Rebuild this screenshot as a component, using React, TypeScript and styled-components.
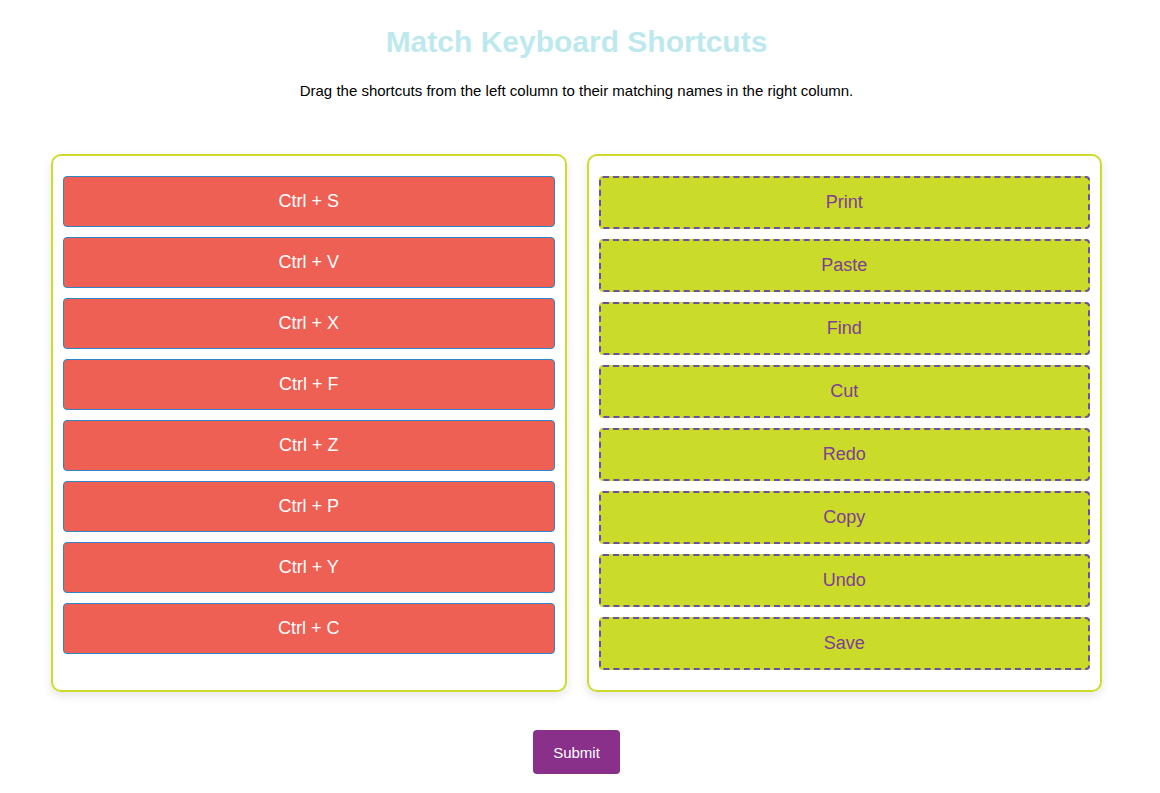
import { createGlobalStyle, styled } from 'styled-components'

const shortcuts = ['Ctrl + S', 'Ctrl + V', 'Ctrl + X', 'Ctrl + F', 'Ctrl + Z', 'Ctrl + P', 'Ctrl + Y', 'Ctrl + C']
const names = ['Print', 'Paste', 'Find', 'Cut', 'Redo', 'Copy', 'Undo', 'Save']

const GlobalStyle = createGlobalStyle`
    body {
        margin: 0;
        background: #fff;
        font-family: "Liberation Sans", Arial, sans-serif;
    }
`

const App = () => {
  return (
    <>
      <GlobalStyle />
      <Page>
        <Title>Match Keyboard Shortcuts</Title>
        <Intro>Drag the shortcuts from the left column to their matching names in the right column.</Intro>
        <Board>
          <Column>
            {shortcuts.map((s) => (
              <Shortcut key={s}>{s}</Shortcut>
            ))}
          </Column>
          <Column>
            {names.map((n) => (
              <Target key={n}>{n}</Target>
            ))}
          </Column>
        </Board>
        <SubmitButton>Submit</SubmitButton>
      </Page>
    </>
  )
}

const Page = styled.div`
    display: flex;
    flex-direction: column;
    align-items: center;
    padding: 25px 7px 0 0;
`

const Title = styled.h1`
    margin: 0;
    font-size: 30px;
    font-weight: bold;
    color: #bde9ee;
`

const Intro = styled.p`
    margin: 23px 0 0;
    font-size: 15px;
    color: #000;
`

const Board = styled.div`
    display: flex;
    gap: 20px;
    width: 1051px;
    margin-top: 55px;
`

const Column = styled.div`
    flex: 1;
    border: 2px solid #cddc2b;
    border-radius: 10px;
    padding: 20px 10px;
    box-shadow: 0 4px 10px rgba(0, 0, 0, 0.1);
    display: flex;
    flex-direction: column;
    gap: 10px;
`

const Shortcut = styled.div`
    background: #ef6054;
    border: 1px solid #2e86c8;
    border-radius: 4px;
    padding: 14px;
    font-size: 18px;
    color: #fff;
    text-align: center;
`

const Target = styled.div`
    background: #cbdb29;
    border: 2px dashed #6c4fa0;
    border-radius: 4px;
    padding: 14px;
    font-size: 18px;
    color: #7e3d98;
    text-align: center;
`

const SubmitButton = styled.button`
    margin-top: 38px;
    width: 87px;
    height: 44px;
    border: none;
    border-radius: 4px;
    background: #88308a;
    color: #fff;
    font-family: "Liberation Sans", Arial, sans-serif;
    font-size: 15px;
    cursor: pointer;
`

export default App
